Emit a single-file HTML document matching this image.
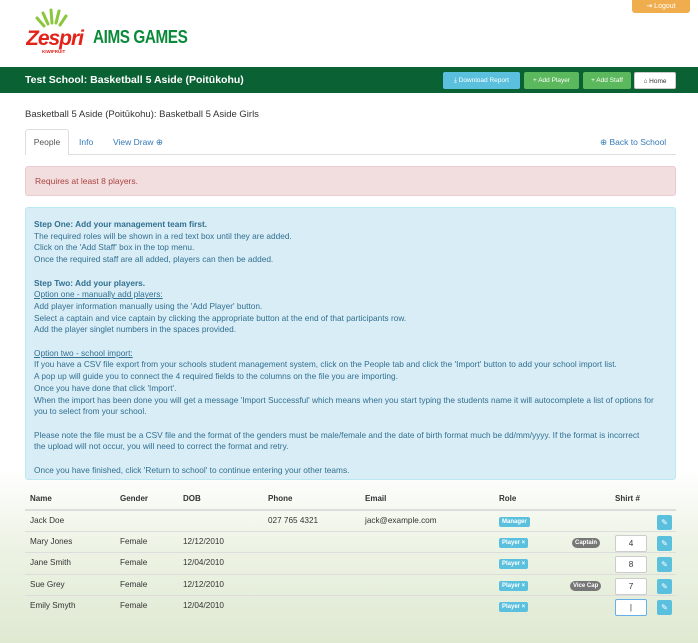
<!DOCTYPE html>
<html><head><meta charset="utf-8"><style>
*{box-sizing:border-box;margin:0;padding:0}
body{width:698px;height:643px;overflow:hidden;font-family:"Liberation Sans",sans-serif;font-size:8px;color:#333;background:linear-gradient(#fff 0,#fff 470px,#eef4e6 540px,#dfe9d2 643px);position:relative}
.abs{position:absolute}
.logout{left:632px;top:0;width:58px;height:13px;background:#f0ad4e;color:#fff;font-size:7px;line-height:13px;text-align:center;border-radius:0 0 3px 3px}
.bar{left:0;top:67px;width:698px;height:26px;background:#0a6133}
.bar .t{position:absolute;left:25px;top:7px;color:#fff;font-size:10.5px;font-weight:bold}
.btn{position:absolute;top:5px;height:17px;line-height:17px;font-size:6.5px;color:#fff;text-align:center;border-radius:2px}
.info{left:25px;top:207px;width:651px;height:273px;background:#d9edf7;border:1px solid #bce8f1;border-radius:3px;color:#31708f;padding:11px 0 0 8px;font-size:8.3px;line-height:11.7px;white-space:nowrap}
.row{position:absolute;left:25px;width:651px;height:21.5px;border-top:1px solid #ddd;font-size:8.2px;line-height:20px}
.row span{position:absolute}
.lbl{position:absolute;top:6px;height:10px;line-height:10px;font-size:6px;font-weight:bold;color:#fff;background:#5bc0de;border-radius:2px;padding:0 3px}
.cap{background:#777;border-radius:5px}
.inp{position:absolute;left:590px;top:3px;width:32px;height:17px;background:#fff;border:1px solid #ccc;border-radius:2px;text-align:center;line-height:15px}
.ed{position:absolute;left:632px;top:4px;width:15px;height:15px;background:#5bc0de;border-radius:2px;color:#fff;font-size:8px;line-height:15px;text-align:center}
</style></head><body>
<div class="abs logout">⇥ Logout</div>
<div class="abs" style="left:26px;top:8px;width:70px;height:46px">
<svg width="70" height="46"><g stroke="#8cc63f" stroke-width="3" stroke-linecap="round"><line x1="22" y1="16" x2="17" y2="5"/><line x1="26" y1="15" x2="25" y2="2"/><line x1="30" y1="15" x2="33" y2="3"/><line x1="34" y1="17" x2="40" y2="8"/><line x1="18" y1="18" x2="11" y2="10"/></g>
<text x="0" y="37" font-family="Liberation Sans" font-style="italic" font-weight="bold" font-size="21" fill="#e2231a" letter-spacing="-1">Zespri</text>
<text x="16" y="45" font-size="4.5" font-weight="bold" fill="#e2231a">KIWIFRUIT</text></svg></div>
<div class="abs" style="left:93px;top:27px;color:#0a8a3a;font-size:18px;font-weight:bold;letter-spacing:-0.5px;transform:scaleX(0.85);transform-origin:left">AIMS GAMES</div>
<div class="abs bar"><div class="t">Test School: Basketball 5 Aside (Poitūkohu)</div>
<div class="btn" style="left:443px;width:77px;background:#5bc0de">⤓ Download Report</div>
<div class="btn" style="left:524px;width:55px;background:#5cb85c">+ Add Player</div>
<div class="btn" style="left:583px;width:48px;background:#5cb85c">+ Add Staff</div>
<div class="btn" style="left:634px;width:42px;background:#fff;color:#333;border:1px solid #ccc">⌂ Home</div></div>
<div class="abs" style="left:25px;top:109px;font-size:9.5px;color:#333">Basketball 5 Aside (Poitūkohu): Basketball 5 Aside Girls</div>
<div class="abs" style="left:25px;top:154px;width:651px;border-top:1px solid #ddd"></div>
<div class="abs" style="left:25px;top:129px;width:44px;height:26px;border:1px solid #ddd;border-bottom:none;background:#fff;border-radius:3px 3px 0 0;text-align:center;line-height:24px;font-size:8.5px;color:#555">People</div>
<div class="abs" style="left:79px;top:137px;color:#337ab7;font-size:8.5px">Info</div>
<div class="abs" style="left:113px;top:137px;color:#337ab7;font-size:8.5px">View Draw ⊕</div>
<div class="abs" style="left:600px;top:137px;color:#337ab7;font-size:8.5px">⊕ Back to School</div>
<div class="abs" style="left:25px;top:166px;width:651px;height:30px;background:#f2dede;border:1px solid #ebccd1;border-radius:3px;color:#a94442;font-size:8.5px;line-height:28px;padding-left:9px">Requires at least 8 players.</div>
<div class="abs info"><b>Step One: Add your management team first.</b><br>The required roles will be shown in a red text box until they are added.<br>Click on the 'Add Staff' box in the top menu.<br>Once the required staff are all added, players can then be added.<br><br><b>Step Two: Add your players.</b><br><u>Option one - manually add players:</u><br>Add player information manually using the 'Add Player' button.<br>Select a captain and vice captain by clicking the appropriate button at the end of that participants row.<br>Add the player singlet numbers in the spaces provided.<br><br><u>Option two - school import:</u><br>If you have a CSV file export from your schools student management system, click on the People tab and click the 'Import' button to add your school import list.<br>A pop up will guide you to connect the 4 required fields to the columns on the file you are importing.<br>Once you have done that click 'Import'.<br>When the import has been done you will get a message 'Import Successful' which means when you start typing the students name it will autocomplete a list of options for<br>you to select from your school.<br><br>Please note the file must be a CSV file and the format of the genders must be male/female and the date of birth format much be dd/mm/yyyy. If the format is incorrect<br>the upload will not occur, you will need to correct the format and retry.<br><br>Once you have finished, click 'Return to school' to continue entering your other teams.</div>
<div class="abs" style="left:25px;top:494px;width:651px;font-size:8px;font-weight:bold;color:#333">
<span class="abs" style="left:5px">Name</span><span class="abs" style="left:95px">Gender</span><span class="abs" style="left:158px">DOB</span><span class="abs" style="left:243px">Phone</span><span class="abs" style="left:340px">Email</span><span class="abs" style="left:474px">Role</span><span class="abs" style="left:590px">Shirt #</span></div>
<div class="row" style="top:509px;border-top:2px solid #ddd"><span style="left:5px">Jack Doe</span><span style="left:243px">027 765 4321</span><span style="left:340px">jack@example.com</span><div class="lbl" style="left:474px">Manager</div><div class="ed">✎</div></div>
<div class="row" style="top:530.5px"><span style="left:5px">Mary Jones</span><span style="left:95px">Female</span><span style="left:158px">12/12/2010</span><div class="lbl" style="left:474px">Player ×</div><div class="lbl cap" style="left:547px">Captain</div><div class="inp">4</div><div class="ed">✎</div></div>
<div class="row" style="top:552px"><span style="left:5px">Jane Smith</span><span style="left:95px">Female</span><span style="left:158px">12/04/2010</span><div class="lbl" style="left:474px">Player ×</div><div class="inp">8</div><div class="ed">✎</div></div>
<div class="row" style="top:573.5px"><span style="left:5px">Sue Grey</span><span style="left:95px">Female</span><span style="left:158px">12/12/2010</span><div class="lbl" style="left:474px">Player ×</div><div class="lbl cap" style="left:545px">Vice Cap</div><div class="inp">7</div><div class="ed">✎</div></div>
<div class="row" style="top:595px"><span style="left:5px">Emily Smyth</span><span style="left:95px">Female</span><span style="left:158px">12/04/2010</span><div class="lbl" style="left:474px">Player ×</div><div class="inp" style="border-color:#66afe9">|</div><div class="ed">✎</div></div>
</body></html>
